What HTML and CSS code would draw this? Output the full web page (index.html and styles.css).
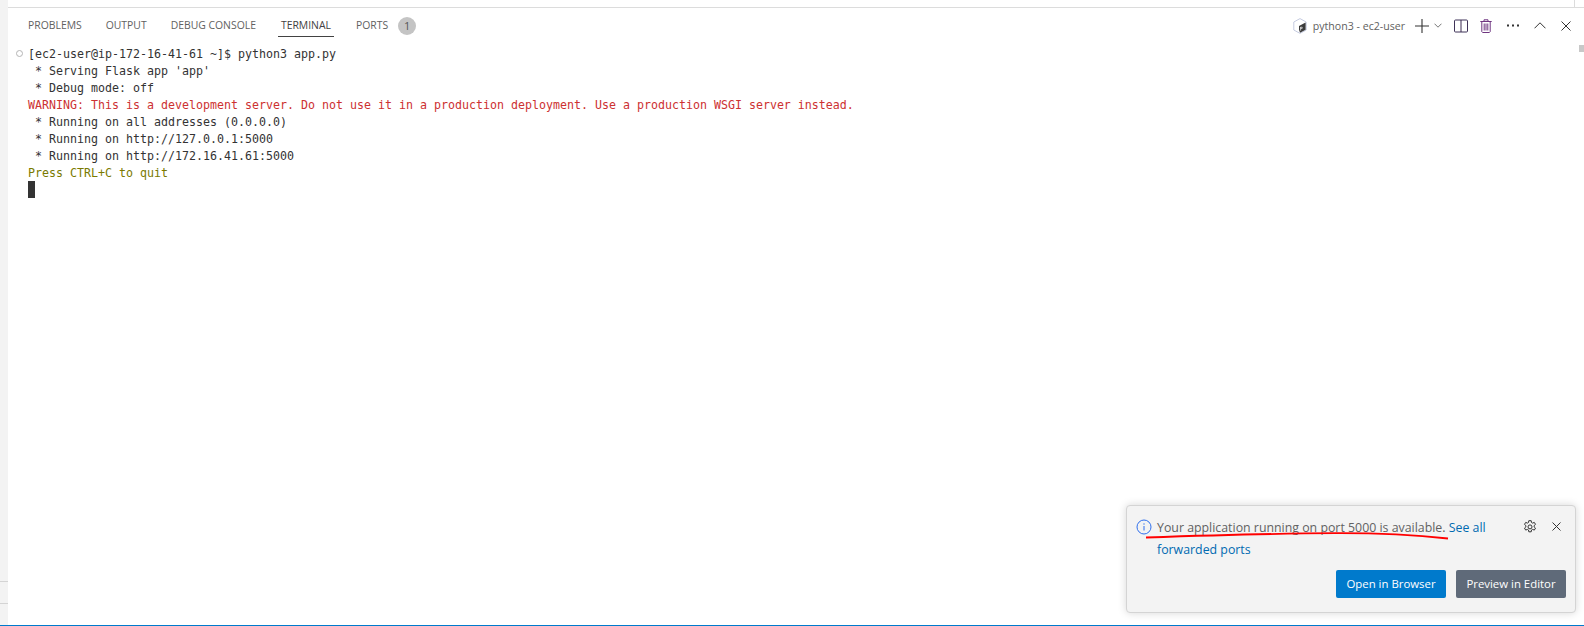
FILE: index.html
```html
<!DOCTYPE html>
<html lang="en">
<head>
<meta charset="utf-8">
<title>Terminal</title>
<link rel="stylesheet" href="styles.css">
</head>
<body>
<div class="window">
  <aside class="rail">
    <div class="rail-cell rail-main"></div>
    <div class="rail-cell rail-small"></div>
    <div class="rail-cell rail-last"></div>
  </aside>
  <main class="panel">
    <div class="top-strip"></div>
    <header class="tabs">
      <nav class="tab-list">
        <span class="tab">PROBLEMS</span>
        <span class="tab">OUTPUT</span>
        <span class="tab tab-debug">DEBUG CONSOLE</span>
        <span class="tab tab-active">TERMINAL</span>
        <span class="tab tab-ports">PORTS</span>
        <span class="badge">1</span>
      </nav>
      <div class="actions">
        <svg class="ic ic-py" width="14" height="16" viewBox="0 0 14 16"><path d="M7 .6 13.200 4v8L7 15.400.8 12V4z" fill="#fff" stroke="#c5cbe0"/><path d="M12.600 4.400v7.300L7 14.800l-1-3V8l6.600-3.600z" fill="#3a3a3a"/><path d="M7.600 9.200h1.600v1.200H7.600zM7.600 9.200v3.400" stroke="#ddd" fill="none" stroke-width=".8"/></svg>
        <span class="term-name">python3 - ec2-user</span>
        <svg class="ic ic-plus" width="14" height="14" viewBox="0 0 14 14"><path d="M7 0v14M0 7h14" stroke="#333" stroke-width="1.100" fill="none"/></svg>
        <svg class="ic ic-chev" width="8" height="5" viewBox="0 0 8 5"><path d="M.5.700 4 4.200 7.500.700" stroke="#777" fill="none"/></svg>
        <svg class="ic ic-split" width="14" height="14" viewBox="0 0 14 14"><rect x=".5" y="1" width="13" height="12" rx="1" stroke="#3f3358" fill="none"/><path d="M7 1v12" stroke="#3a2a50"/></svg>
        <svg class="ic ic-trash" width="12" height="14" viewBox="0 0 12 14"><path d="M.3 2.500h11.400M4 2.500V.8h4v1.700M1.800 2.500v10.200l.8.8h6.800l.8-.8V2.500M4.200 4.500v7M6 4.500v7M7.800 4.500v7" stroke="#6f3580" fill="none"/></svg>
        <svg class="ic ic-dots" width="12" height="3" viewBox="0 0 12 3"><path d="M0 .5h2v2H0zM5 .5h2v2H5zM10 .5h2v2h-2z" fill="#333"/></svg>
        <svg class="ic ic-up" width="12" height="7" viewBox="0 0 12 7"><path d="M.5 6.300 6 .8l5.500 5.500" stroke="#333" fill="none"/></svg>
        <svg class="ic ic-x" width="10" height="10" viewBox="0 0 10 10"><path d="M.5.5l9 9M9.500.5l-9 9" stroke="#333" fill="none"/></svg>
      </div>
    </header>
    <section class="terminal">
      <span class="deco"></span>
      <pre class="line">[ec2-user@ip-172-16-41-61 ~]$ python3 app.py</pre>
      <pre class="line"> * Serving Flask app 'app'</pre>
      <pre class="line"> * Debug mode: off</pre>
      <pre class="line line-red">WARNING: This is a development server. Do not use it in a production deployment. Use a production WSGI server instead.</pre>
      <pre class="line"> * Running on all addresses (0.0.0.0)</pre>
      <pre class="line"> * Running on http://127.0.0.1:5000</pre>
      <pre class="line"> * Running on http://172.16.41.61:5000</pre>
      <pre class="line line-olive">Press CTRL+C to quit</pre>
      <div class="cursor"></div>
    </section>
  </main>
</div>
<aside class="toast">
  <div class="toast-body">
    <svg class="toast-info" width="16" height="16" viewBox="0 0 16 16"><circle cx="8" cy="8" r="7" stroke="#2f6fed" fill="none"/><path d="M8 7v4.500M8 4.300v1.400" stroke="#2f6fed" fill="none"/></svg>
    <p class="toast-text">Your application running on port 5000 is available. <a class="toast-link">See all forwarded ports</a></p>
    <svg class="toast-gear" width="14" height="14" viewBox="0 0 14 14"><path d="M5.800.7h2.400l.3 1.800 1.100.6 1.700-.7 1.200 2-1.400 1.200v1.300l1.400 1.200-1.200 2-1.700-.7-1.100.6-.3 1.800H5.800l-.3-1.800-1.100-.6-1.700.7-1.200-2 1.400-1.200V5.600L1.500 4.400l1.200-2 1.700.7 1.100-.6z" stroke="#333" fill="none"/><circle cx="7" cy="6.900" r="2" stroke="#333" fill="none"/></svg>
    <svg class="toast-x" width="9" height="9" viewBox="0 0 9 9"><path d="M.5.5l8 8M8.500.5l-8 8" stroke="#333" fill="none"/></svg>
  </div>
  <div class="toast-buttons">
    <span class="btn btn-primary">Open in Browser</span>
    <span class="btn btn-secondary">Preview in Editor</span>
  </div>
  <svg class="scribble" width="304" height="8" viewBox="0 0 304 8"><path d="M1 5.500C60 3.500 130 1.500 190 1.200 240 1 270 3 303 6.500" stroke="#f00" stroke-width="1.800" fill="none"/></svg>
</aside>
<div class="corner-line"></div>
<div class="handle"></div>
</body>
</html>
```

FILE: styles.css
```css
* { box-sizing: border-box; }
html, body { margin: 0; height: 100%; }
body {
  background: #fff;
  overflow: hidden;
  font-family: "Open Sans", "Noto Sans", sans-serif;
  color: #333;
  position: relative;
}
.window {
  display: flex;
  height: 625px;
}
body::after {
  content: "";
  display: block;
  height: 1px;
  background: #007acc;
}
.rail {
  width: 8px;
  flex: none;
  display: flex;
  flex-direction: column;
  background: #f3f3f3;
}
.rail-cell { border-bottom: 1px solid #d4d4d4; }
.rail-main { height: 582px; }
.rail-small { height: 22px; }
.rail-last { flex: 1; border-bottom: 0; }
.panel {
  flex: 1;
  min-width: 0;
  display: flex;
  flex-direction: column;
}
.top-strip {
  height: 8px;
  flex: none;
  border-bottom: 1px solid #dcdcdc;
}
.tabs {
  display: flex;
  align-items: flex-end;
  justify-content: space-between;
  height: 29px;
  flex: none;
  padding: 0 13px 0 20px;
}
.tab-list { display: flex; align-items: center; height: 23px; }
.tab {
  position: relative;
  font-size: 10.4px;
  line-height: 23px;
  height: 23px;
  color: #616161;
  margin-right: 24px;
  white-space: nowrap;
}
.tab-debug { margin-right: 25px; }
.tab-active { color: #424242; margin-right: 25px; }
.tab-active::after {
  content: "";
  position: absolute;
  left: -3px;
  right: -3px;
  bottom: 0;
  height: 1px;
  background: #424242;
}
.tab-ports { margin-right: 10px; }
.badge {
  width: 18px;
  height: 18px;
  border-radius: 50%;
  background: #c4c4c4;
  color: #555;
  font-size: 11px;
  line-height: 18px;
  text-align: center;
}
.actions { display: flex; align-items: center; height: 23px; }
.ic { flex: none; display: block; }
.term-name { font-size: 10.6px; color: #616161; margin: 0 10px 0 6px; white-space: nowrap; }
.ic-chev { margin-left: 5px; }
.ic-split { margin-left: 12px; }
.ic-trash { margin-left: 12px; }
.ic-dots { margin-left: 15px; }
.ic-up { margin-left: 15px; }
.ic-x { margin-left: 15px; }
.terminal {
  position: relative;
  flex: 1;
  padding: 9px 0 0 20px;
}
.line {
  margin: 0;
  font-family: "DejaVu Sans Mono", monospace;
  font-size: 11.63px;
  line-height: 17px;
  height: 17px;
  color: #333;
  white-space: pre;
}
.line-red { color: #cd3131; }
.line-olive { color: #7a7a00; }
.cursor { width: 7px; height: 17px; margin-top: -1px; background: #333; }
.deco {
  position: absolute;
  left: 8px;
  top: 13px;
  width: 7px;
  height: 7px;
  border: 1px solid #b5b5b5;
  border-radius: 50%;
}
.toast {
  position: absolute;
  left: 1126px;
  top: 505px;
  width: 450px;
  height: 108px;
  background: #f3f3f3;
  border: 1px solid #d4d4d4;
  border-radius: 4px;
  box-shadow: 0 0 8px rgba(0,0,0,.16);
  padding: 11px 9px 0 9px;
}
.toast-body { display: flex; align-items: flex-start; }
.toast-info { flex: none; margin-top: 2px; }
.toast-text {
  margin: 0 0 0 5px;
  width: 335px;
  font-size: 12.35px;
  line-height: 22px;
  color: #616161;
}
.toast-link { color: #006ab1; }
.toast-gear { flex: none; margin: 3px 0 0 31px; }
.toast-x { flex: none; margin: 5px 0 0 15px; }
.toast-buttons {
  display: flex;
  justify-content: flex-end;
  gap: 10px;
  margin-top: 9px;
}
.btn {
  width: 110px;
  height: 28px;
  border-radius: 2px;
  color: #fff;
  font-size: 11.4px;
  line-height: 28px;
  text-align: center;
}
.btn-primary { background: #007acc; }
.btn-secondary { background: #5f6a79; }
.scribble { position: absolute; left: 18px; top: 26px; }
.corner-line {
  position: absolute;
  left: 1574px;
  top: 0;
  width: 1px;
  height: 8px;
  background: #dcdcdc;
}
.handle {
  position: absolute;
  left: 1579px;
  top: 45px;
  width: 5px;
  height: 7px;
  background: #c8c8c8;
}
```
